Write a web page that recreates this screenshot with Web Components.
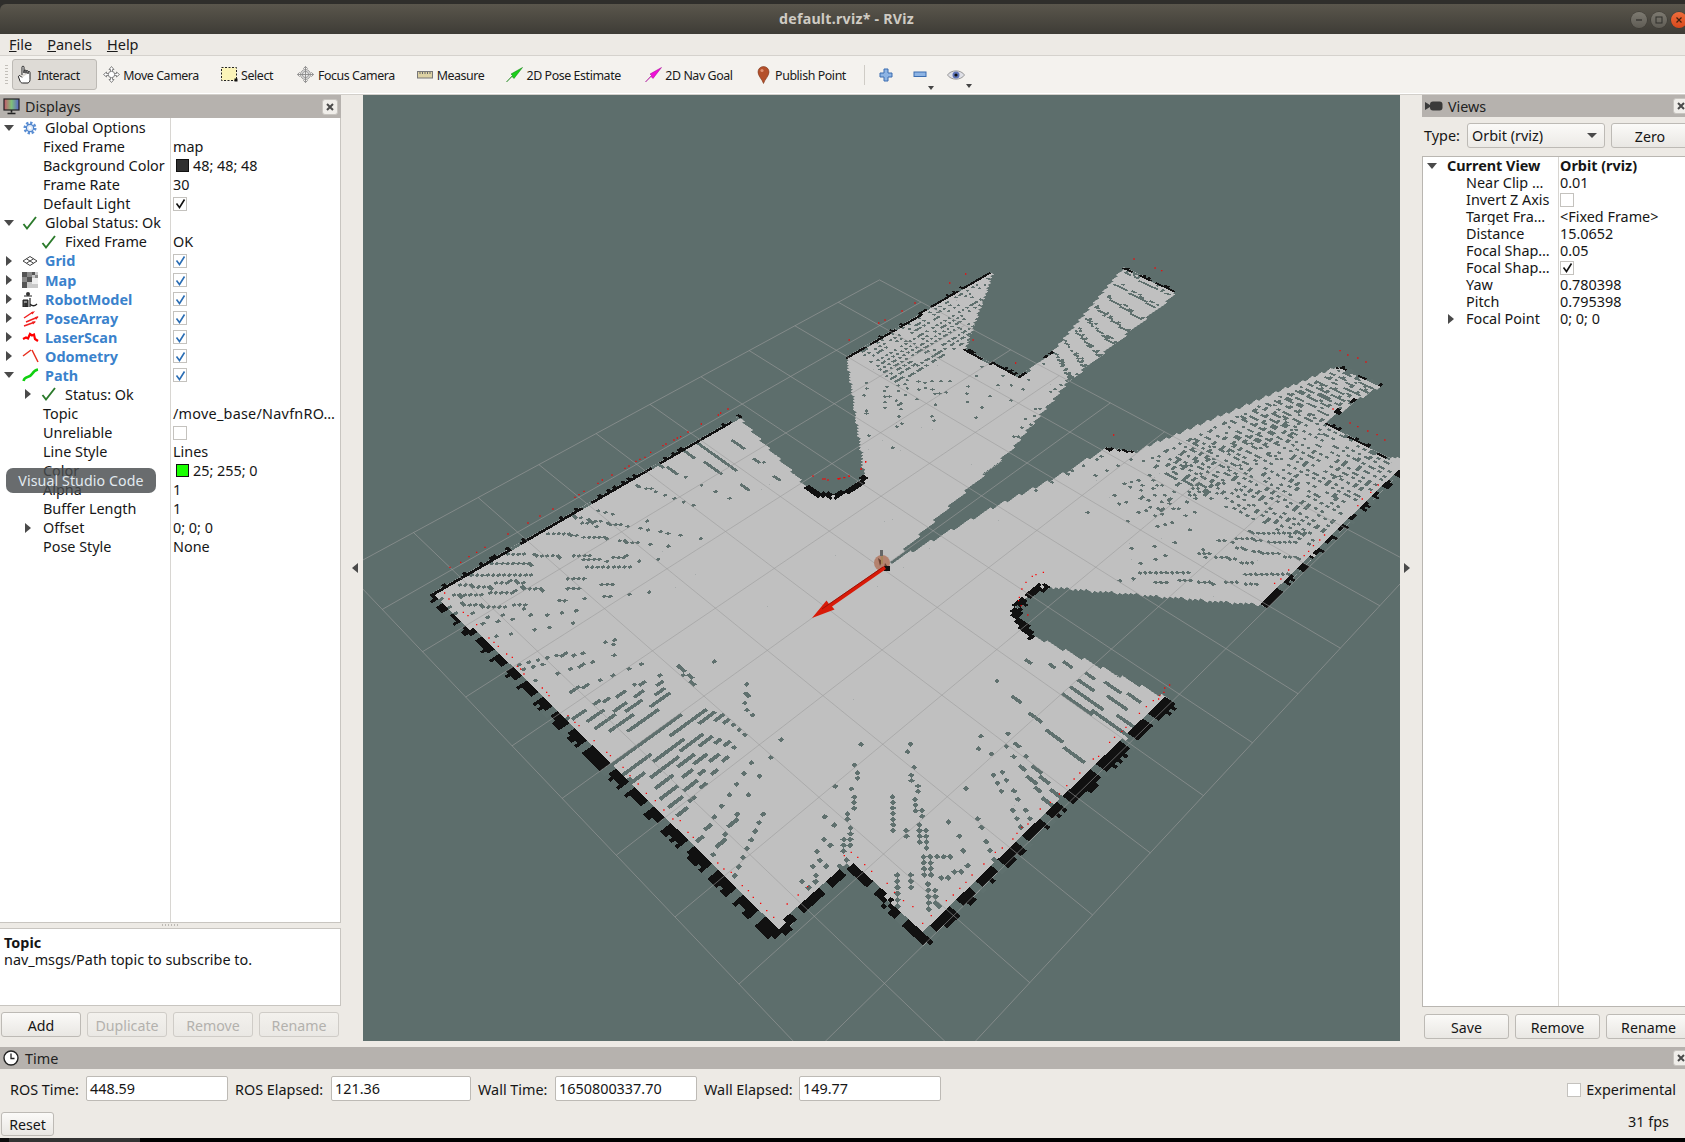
<!DOCTYPE html>
<html><head><meta charset="utf-8">
<style>
html,body{margin:0;padding:0;background:#edeae5;overflow:hidden}
body{font:14.4px "Noto Sans",sans-serif;color:#151515}
</style></head>
<body>
<rviz-window>
  <title-bar>default.rviz* - RViz</title-bar>
  <menu-bar><u>F</u>ile|<u>P</u>anels|<u>H</u>elp</menu-bar>
  <tool-bar></tool-bar>
  <dock-area>
    <dock-panel slot="left" title="Displays" icon="monitor" closable>
      <tree-view name-w="170" row-h="19.07" style="height:805px" bleft="0">
        <prop-row arrow="down" icon="gear" label="Global Options"></prop-row>
        <prop-row level="1" label="Fixed Frame" value="map"></prop-row>
        <prop-row level="1" label="Background Color" value="48; 48; 48" swatch="#303030"></prop-row>
        <prop-row level="1" label="Frame Rate" value="30"></prop-row>
        <prop-row level="1" label="Default Light" check="black"></prop-row>
        <prop-row arrow="down" icon="check" label="Global Status: Ok"></prop-row>
        <prop-row level="1" icon="check" label="Fixed Frame" value="OK"></prop-row>
        <prop-row arrow="right" icon="grid" label="Grid" blue check="blue"></prop-row>
        <prop-row arrow="right" icon="map" label="Map" blue check="blue"></prop-row>
        <prop-row arrow="right" icon="robot" label="RobotModel" blue check="blue"></prop-row>
        <prop-row arrow="right" icon="pose" label="PoseArray" blue check="blue"></prop-row>
        <prop-row arrow="right" icon="laser" label="LaserScan" blue check="blue"></prop-row>
        <prop-row arrow="right" icon="odom" label="Odometry" blue check="blue"></prop-row>
        <prop-row arrow="down" icon="path" label="Path" blue check="blue"></prop-row>
        <prop-row level="1" arrow="right" icon="check" label="Status: Ok"></prop-row>
        <prop-row level="1" label="Topic" value="/move_base/NavfnRO…" vls=".25"></prop-row>
        <prop-row level="1" label="Unreliable" check="off"></prop-row>
        <prop-row level="1" label="Line Style" value="Lines"></prop-row>
        <prop-row level="1" label="Color" value="25; 255; 0" swatch="#19ff00"></prop-row>
        <prop-row level="1" label="Alpha" value="1"></prop-row>
        <prop-row level="1" label="Buffer Length" value="1"></prop-row>
        <prop-row level="1" arrow="right" label="Offset" value="0; 0; 0"></prop-row>
        <prop-row level="1" label="Pose Style" value="None"></prop-row>
        <os-tooltip>Visual Studio Code</os-tooltip>
      </tree-view>
      <grip-dots></grip-dots>
      <help-box><b>Topic</b><span>nav_msgs/Path topic to subscribe to.</span></help-box>
      <button-row gap="6" pad="1">
        <qt-button w="80">Add</qt-button><qt-button w="80" disabled>Duplicate</qt-button><qt-button w="80" disabled>Remove</qt-button><qt-button w="80" disabled>Rename</qt-button>
      </button-row>
    </dock-panel>
    <splitter-arrow slot="sl" dir="left"></splitter-arrow>
    <map-view slot="center"></map-view>
    <splitter-arrow slot="sr" dir="right"></splitter-arrow>
    <dock-panel slot="right" title="Views" icon="camera" closable wide>
      <type-row></type-row>
      <tree-view name-w="135" row-h="17.05" bleft="1" style="height:851px">
        <prop-row arrow="down" label="Current View" bold value="Orbit (rviz)" valbold vx="1"></prop-row>
        <prop-row level="1" label="Near Clip …" value="0.01" vx="1"></prop-row>
        <prop-row level="1" label="Invert Z Axis" check="off" vx="1"></prop-row>
        <prop-row level="1" label="Target Fra…" value="&lt;Fixed Frame&gt;" vx="1"></prop-row>
        <prop-row level="1" label="Distance" value="15.0652" vx="1"></prop-row>
        <prop-row level="1" label="Focal Shap…" value="0.05" vx="1"></prop-row>
        <prop-row level="1" label="Focal Shap…" check="black" vx="1"></prop-row>
        <prop-row level="1" label="Yaw" value="0.780398" vx="1"></prop-row>
        <prop-row level="1" label="Pitch" value="0.795398" vx="1"></prop-row>
        <prop-row level="1" arrow="right" label="Focal Point" value="0; 0; 0" vx="1"></prop-row>
      </tree-view>
      <button-row gap="6" pad="2" top="7">
        <qt-button w="85">Save</qt-button><qt-button w="85">Remove</qt-button><qt-button w="85">Rename</qt-button>
      </button-row>
    </dock-panel>
  </dock-area>
  <time-panel></time-panel>
  <bottom-strip></bottom-strip>
</rviz-window>

<script>
const ICONS={
 monitor:`<svg width="17" height="17" viewBox="0 0 17 17"><defs><linearGradient id="m" x1="0" x2="1"><stop offset="0" stop-color="#c8586a"/><stop offset=".5" stop-color="#7fbf7a"/><stop offset="1" stop-color="#5a64c8"/></linearGradient></defs><rect x="1" y="1" width="15" height="11" fill="url(#m)" stroke="#222" stroke-width="1.2"/><path d="M8.5 12v2.5M4.5 15.5h8" stroke="#222" stroke-width="1.6"/></svg>`,
 camera:`<svg width="18" height="12" viewBox="0 0 18 12"><path d="M0 2l5 3v2l-5 3z" fill="#3a3a3a"/><rect x="5" y="1.5" width="12.5" height="9" rx="3" fill="#3a3a3a"/></svg>`,
 clock:`<svg width="16" height="16" viewBox="0 0 16 16"><circle cx="8" cy="8" r="7" fill="#fff" stroke="#222" stroke-width="1.4"/><path d="M8 3.5V8.5H11.5" fill="none" stroke="#222" stroke-width="1.3"/></svg>`,
 gear:`<svg width="16" height="16" viewBox="0 0 16 16"><circle cx="8" cy="8" r="5.2" fill="none" stroke="#5b8fd4" stroke-width="2.6" stroke-dasharray="2.3 1.7"/><circle cx="8" cy="8" r="3.6" fill="#dfe9f6" stroke="#4f84cc" stroke-width="1.2"/><circle cx="8" cy="8" r="1.3" fill="#fff"/></svg>`,
 check:`<svg width="16" height="16" viewBox="0 0 16 16"><path d="M1.5 9 5 13.5 14 2" fill="none" stroke="#2b7a2b" stroke-width="1.9"/></svg>`,
 grid:`<svg width="16" height="12" viewBox="0 0 16 12"><path d="M8 1.5 15 6 8 10.5 1 6zM4.5 3.8 11.5 8.2M11.5 3.8 4.5 8.2" fill="#fff" stroke="#444" stroke-width="1"/></svg>`,
 map:`<svg width="16" height="16" viewBox="0 0 16 16"><rect width="16" height="16" fill="#c9c9c9"/><path d="M0 0h5v5H0zM5 5h5v5H5zM0 10h5v6H0zM10 0h3v3h-3z" fill="#555"/><path d="M5 0h5v5H5zM0 5h5v5H0zM13 3h3v3h-3z" fill="#8a8a8a"/><path d="M10 6h6v6h-6z" fill="#eee"/></svg>`,
 robot:`<svg width="16" height="16" viewBox="0 0 16 16"><circle cx="6" cy="3" r="2" fill="#333"/><path d="M2 5h8M1 9h5v7H1z" stroke="#222" fill="#444"/><path d="M4 11v5M8 7v9M8 13c3 3 5 2 7 0" stroke="#222" fill="none" stroke-width="1.2"/><path d="M2 11h3" stroke="#ddd"/></svg>`,
 pose:`<svg width="17" height="17" viewBox="0 0 17 17"><path d="M2 8 11 2M4 12 16 7M2 16 13 12" stroke="#f02020" stroke-width="1.5"/><path d="M9 2.5 13 1 10.5 4.5M13 7 16.5 6.5 14 10M10 11.5 14 11.5 11 14.5" fill="#f02020"/></svg>`,
 laser:`<svg width="17" height="12" viewBox="0 0 17 12"><path d="M1 8 4 6.5 6 7.5 8 3 10 4.5 12 3.5 13 8 16 10" fill="none" stroke="#f00" stroke-width="2.2"/></svg>`,
 odom:`<svg width="17" height="14" viewBox="0 0 17 14"><path d="M1 7 9 1M10 1 16 13" stroke="#e83020" stroke-width="1.5"/></svg>`,
 path:`<svg width="17" height="15" viewBox="0 0 17 15"><path d="M1.5 13C3 7 7 11 10 6 12 3 13 2 16 1.5" fill="none" stroke="#10d010" stroke-width="2.5"/></svg>`,
 hand:`<svg width="17" height="19" viewBox="0 0 17 19"><path d="M5 10V2.2a1 1 0 0 1 2 0V8M7 8V6a1 1 0 0 1 2 0v2.5M9 8V6.5a1 1 0 0 1 2 0V9M11 8.5V7.5a1 1 0 0 1 2 0v7c0 2-1 3-2 3.5H5.5C4 18 3.5 17 3 16L1.5 12c-.4-1.2 1-2 2-1L5 12.5" fill="#fff" stroke="#222" stroke-width="1"/></svg>`,
 move:`<svg width="17" height="17" viewBox="0 0 17 17"><g fill="#fff" stroke="#777" stroke-width=".9"><path d="M8.5 .5 11 3.5H9.5V6H7.5V3.5H6zM8.5 16.5 11 13.5H9.5V11H7.5V13.5H6zM.5 8.5 3.5 6V7.5H6V9.5H3.5V11zM16.5 8.5 13.5 6V7.5H11V9.5H13.5V11z"/><circle cx="8.5" cy="8.5" r="3.2"/></g></svg>`,
 select:`<svg width="17" height="15" viewBox="0 0 17 15"><rect x=".5" y=".5" width="15" height="13" fill="#fbf4b8" stroke="#222" stroke-dasharray="2 1.5"/><rect x="13.5" y="11.5" width="3" height="3" fill="#111"/></svg>`,
 focus:`<svg width="19" height="19" viewBox="0 0 19 19"><g fill="none" stroke="#888" stroke-width="1"><circle cx="9.5" cy="9.5" r="5.5" fill="#eee"/><path d="M9.5 .5V18.5M.5 9.5H18.5M6 9.5a3.5 3.5 0 0 0 7 0 3.5 3.5 0 0 0-7 0"/><path d="M7 3 9.5 .5 12 3M7 16 9.5 18.5 12 16M3 7 .5 9.5 3 12M16 7 18.5 9.5 16 12"/></g></svg>`,
 measure:`<svg width="16" height="8" viewBox="0 0 16 8"><rect x=".5" y=".5" width="15" height="6.5" fill="#ddd2a4" stroke="#777"/><path d="M3 1v2M5.5 1v2M8 1v2M10.5 1v2M13 1v2" stroke="#666"/></svg>`,
 pose2d:`<svg width="17" height="16" viewBox="0 0 17 16"><path d="M.5 15 6 9.5 8 11.5 16.5 .5 5 7 6.5 8.5Z" fill="#1ad01a" stroke="#0a7a0a" stroke-width=".5"/></svg>`,
 nav:`<svg width="17" height="16" viewBox="0 0 17 16"><path d="M.5 15 6 9.5 8 11.5 16.5 .5 5 7 6.5 8.5Z" fill="#f010d8" stroke="#a00090" stroke-width=".5"/></svg>`,
 pin:`<svg width="13" height="18" viewBox="0 0 13 18"><path d="M6.5 17.5C5 13 1 10 1 6a5.5 5.5 0 0 1 11 0c0 4-4 7-5.5 11.5Z" fill="#b4502a" stroke="#7a3418" stroke-width=".6"/><circle cx="5" cy="4.5" r="1.6" fill="#e09070"/></svg>`,
 plus:`<svg width="14" height="14" viewBox="0 0 14 14"><path d="M5 1h4v4h4v4H9v4H5V9H1V5h4z" fill="#8db4e4" stroke="#3a6db0"/></svg>`,
 minus:`<svg width="14" height="7" viewBox="0 0 14 7"><rect x="1" y="1" width="12" height="4.5" fill="#8db4e4" stroke="#3a6db0"/></svg>`,
 eye:`<svg width="18" height="12" viewBox="0 0 18 12"><path d="M.5 6C4 .5 14 .5 17.5 6 14 11.5 4 11.5 .5 6Z" fill="#dfe0e6" stroke="#999"/><circle cx="9" cy="6" r="3.5" fill="#5e74b8"/><circle cx="9" cy="6" r="1.6" fill="#111"/></svg>`
};
const FONT='"Noto Sans",sans-serif';
function def(name,cls){customElements.define(name,cls)}
function shadow(el,html){const r=el.attachShadow({mode:'open'});r.innerHTML=html;return r}

def('rviz-window',class extends HTMLElement{constructor(){super();shadow(this,`<style>:host{display:flex;flex-direction:column;width:1685px;height:1142px;overflow:hidden;background:#edeae5;position:relative}</style><slot></slot>`)}});

def('title-bar',class extends HTMLElement{constructor(){super();shadow(this,`<style>
:host{display:block;background:#2f2e2b;padding-top:4px;height:34px;box-sizing:border-box;flex:none}
.b{height:30px;display:grid;grid-template-columns:1fr auto 1fr;align-items:center;border-radius:6px 0 0 0;background:linear-gradient(#5a564c,#3e3c36)}
.t{grid-column:2;font:bold 14.2px ${FONT};color:#cfcbc3;padding:0 0 2px 8px;letter-spacing:.25px}
.w{grid-column:3;justify-self:end;display:flex;gap:4px;margin-right:-2px;margin-top:1px}
.w i{display:block;width:16px;height:16px;border-radius:50%;background:linear-gradient(#7d7a71,#5f5c54);box-shadow:0 0 0 .5px #3a3832;position:relative}
.w i.c{background:linear-gradient(#ee6d3c,#d8481c)}
.w svg{position:absolute;left:3px;top:3px}
</style><div class="b"><div class="t"><slot></slot></div><div class="w">
<i><svg width="10" height="10"><path d="M2 5h6" stroke="#2f2e2a" stroke-width="1.2"/></svg></i>
<i><svg width="10" height="10"><rect x="2" y="2" width="6" height="6" fill="none" stroke="#2f2e2a"/></svg></i>
<i class="c"><svg width="10" height="10"><path d="M2.5 2.5l5 5M7.5 2.5l-5 5" stroke="#41200f" stroke-width="1.2"/></svg></i>
</div></div>`)}});

def('menu-bar',class extends HTMLElement{constructor(){super();shadow(this,`<style>
:host{display:flex;flex:none;height:22px;box-sizing:border-box;border-bottom:1px solid #d5d2cd;background:#edeae5;padding:0 0 2px 9px;gap:15px;align-items:center;font:14.5px/20px ${FONT};color:#1b1b1b}
</style><slot></slot>`)}
 connectedCallback(){const parts=this.innerHTML.split('|');this.innerHTML=parts.map(p=>`<span>${p}</span>`).join('')}});

def('tool-button',class extends HTMLElement{constructor(){super();shadow(this,`<style>
:host{display:flex;flex:none;align-items:center;height:31px;margin-left:1.3px;padding:0 16px 0 4px;box-sizing:border-box;border:1px solid transparent;border-radius:3px;font:12.4px ${FONT};letter-spacing:-.42px;color:#1a1a1a}
:host([active]){background:#dedbd6;border-color:#bdbab5;margin-left:0}
.i{width:17px;height:19px;display:flex;align-items:center;justify-content:center;margin-right:3.5px;flex:none}
.l{white-space:nowrap;padding-top:1px}
</style><span class="i"></span><span class="l"><slot></slot></span>`)}
 connectedCallback(){this.shadowRoot.querySelector('.i').innerHTML=ICONS[this.getAttribute('icon')]||'';this.shadowRoot.querySelector('.l').style.width=this.getAttribute('w')+'px'}});

def('tool-bar',class extends HTMLElement{constructor(){super();const B=[['hand','Interact',42,1],['move','Move Camera',74],['select','Select',33],['focus','Focus Camera',75],['measure','Measure',46],['pose2d','2D Pose Estimate',95],['nav','2D Nav Goal',66],['pin','Publish Point',71]];
 shadow(this,`<style>
:host{display:flex;flex:none;align-items:center;height:39px;box-sizing:border-box;background:#f4f2ee;border-bottom:1px solid #d2cfca;box-shadow:inset 0 -1px 0 #fff;padding:0 0 1px 5px}
.h{width:3px;height:20px;margin-right:4px;background:repeating-linear-gradient(#c3c0ba 0 1px,transparent 1px 3px)}
.s{width:1px;height:20px;background:#cfccc6;margin:0 14px 0 1px}
.g{position:relative;display:flex;justify-content:center;width:14px;margin-right:20px}
.g b{position:absolute;right:-7px;top:15px;border:3.5px solid transparent;border-top:4px solid #444;border-bottom:0}
</style><span class="h"></span>${B.map(b=>`<tool-button icon="${b[0]}" w="${b[2]}" ${b[3]?'active':''}>${b[1]}</tool-button>`).join('')}
<span class="s"></span><span class="g">${ICONS.plus}</span><span class="g">${ICONS.minus}<b></b></span><span class="g" style="width:18px">${ICONS.eye}<b></b></span>`)}});

def('dock-area',class extends HTMLElement{constructor(){super();shadow(this,`<style>
:host{display:grid;flex:none;height:952px;grid-template-columns:341px 22px 1037px 22px 263px;overflow:hidden}
.c{height:946px}
</style><slot name="left"></slot><slot name="sl"></slot><div class="c"><slot name="center"></slot></div><slot name="sr"></slot><slot name="right"></slot>`)}});

def('close-btn',class extends HTMLElement{constructor(){super();shadow(this,`<style>
:host{display:flex;align-items:center;justify-content:center;width:16px;height:16px;box-sizing:border-box;border:1px solid #c8c5c0;border-radius:3px;background:#f0eeea;flex:none}
</style><svg width="8" height="8"><path d="M1 1l6 6M7 1l-6 6" stroke="#4a4a4a" stroke-width="2"/></svg>`)}});

def('dock-panel',class extends HTMLElement{constructor(){super();shadow(this,`<style>
:host{display:flex;flex-direction:column;min-width:0;overflow:hidden;height:952px}
:host([wide]) .in{width:268px}
.in{display:flex;flex-direction:column}
.hd{display:flex;align-items:center;background:#b6b2ae;height:23px;flex:none;padding:0 3px 0 3px;font:14.3px ${FONT};color:#222}
.ic{width:22px;display:flex;flex:none}
.t{flex:1}
:host([wide]) .hd{height:22px;padding-right:0;width:263px;box-sizing:border-box}
:host([wide]) .ic{width:23px}
:host([wide]) close-btn{margin-right:-4px}
</style><div class="hd"><span class="ic"></span><span class="t"></span><close-btn></close-btn></div><div class="in"><slot></slot></div>`)}
 connectedCallback(){const s=this.shadowRoot;s.querySelector('.ic').innerHTML=ICONS[this.getAttribute('icon')];if(this.hasAttribute('title')){s.querySelector('.t').textContent=this.getAttribute('title');this.removeAttribute('title')}}});

def('tree-view',class extends HTMLElement{constructor(){super();shadow(this,`<style>
:host{display:flex;flex-direction:column;box-sizing:border-box;background:#fff;position:relative;flex:none;border-right:1px solid #c8c5c0;border-bottom:1px solid #c8c5c0;overflow:hidden}
:host([bleft="1"]){border:1px solid #b9b6b1;margin-left:0}
.rest{flex:1;margin-left:var(--name-w);border-left:1px solid #d8d6d2}
</style><slot></slot><div class="rest"></div>`)}
 connectedCallback(){this.style.setProperty('--name-w',this.getAttribute('name-w')+'px');this.style.setProperty('--row-h',this.getAttribute('row-h')+'px')}});

const ARW={down:`<svg width="10" height="6"><path d="M0 0h10L5 6z" fill="#4a4a4a"/></svg>`,right:`<svg width="6" height="10"><path d="M0 0v10l6-5z" fill="#4a4a4a"/></svg>`};
def('prop-row',class extends HTMLElement{constructor(){super();shadow(this,`<style>
:host{display:flex;flex:none;height:var(--row-h);white-space:nowrap;font:14.4px/var(--row-h) ${FONT};color:#161616}
.n{width:var(--name-w);display:flex;align-items:center;flex:none;overflow:hidden}
.a{width:18px;display:flex;justify-content:center;align-items:center;flex:none}
.ic{display:flex;width:27px;justify-content:flex-start;padding-left:4px;box-sizing:border-box;flex:none;align-items:center}
.sp{width:6px;flex:none}
.v{flex:1;border-left:1px solid #d8d6d2;display:flex;align-items:center;padding-left:2px;overflow:hidden}
.box{width:14px;height:14px;box-sizing:border-box;border:1px solid #c4c2be;background:#fff;display:flex;align-items:center;justify-content:center;margin-left:0}
.sw{width:13px;height:13px;box-sizing:border-box;border:1px solid #111;margin:0 4px 0 3px;flex:none}
.blue{color:#3a82cc;font-weight:700}.bold{font-weight:700}
.l1{margin-left:1px}
</style><div class="n"></div><div class="v"></div>`)}
 connectedCallback(){const g=k=>this.getAttribute(k),lv=+(g('level')||0),s=this.shadowRoot;
  const ic=g('icon');let h=`<span style="width:${lv*19}px;flex:none"></span><span class="a">${ARW[g('arrow')]||''}</span>`;
  h+=ic?`<span class="ic">${ICONS[ic]}</span>`:`<span class="sp"></span>`;
  h+=`<span class="${this.hasAttribute('blue')?'blue':this.hasAttribute('bold')?'bold':''} ${lv&&ic?'l1':''}">${g('label')}</span>`;
  s.querySelector('.n').innerHTML=h;
  const chk=g('check'),col=chk=='blue'?'#2a6db4':'#111';let v='';
  if(chk)v=`<span class="box">${chk=='off'?'':`<svg width="11" height="11"><path d="M1.5 5.5 4.5 9.5 9.5 1.5" fill="none" stroke="${col}" stroke-width="1.6"/></svg>`}</span>`;
  else{if(g('swatch'))v=`<span class="sw" style="background:${g('swatch')}"></span>`;v+=`<span class="${this.hasAttribute('valbold')?'bold':''}" style="letter-spacing:${g('vls')||0}px">${(g('value')||'').replace(/</g,'&lt;')}</span>`}
  const ve=s.querySelector('.v');ve.innerHTML=v;ve.style.paddingLeft=(g('vx')||'2')+'px'}});

def('os-tooltip',class extends HTMLElement{constructor(){super();shadow(this,`<style>
:host{position:absolute;left:6px;top:350px;width:150px;height:25px;border-radius:7px;background:rgba(72,76,78,.82);color:#e2eaf0;font:14.2px/25px ${FONT};text-align:center;letter-spacing:.1px}
</style><slot></slot>`)}});

def('grip-dots',class extends HTMLElement{constructor(){super();shadow(this,`<style>
:host{display:block;height:5px;flex:none;position:relative}
i{position:absolute;left:162px;top:1px;width:16px;height:2px;background:repeating-linear-gradient(90deg,#bcb9b4 0 1px,transparent 1px 3px)}
</style><i></i>`)}});

def('help-box',class extends HTMLElement{constructor(){super();shadow(this,`<style>
:host{display:flex;flex-direction:column;flex:none;height:78px;box-sizing:border-box;background:#fff;border:1px solid #c8c5c0;border-left:0;padding:5px 4px;font:14.4px/17px ${FONT};color:#151515}
::slotted(b){display:block}
</style><slot></slot>`)}});

def('button-row',class extends HTMLElement{constructor(){super();shadow(this,`<style>:host{display:flex;flex:none;margin-top:6px}</style><slot></slot>`)}
 connectedCallback(){this.style.gap=this.getAttribute('gap')+'px';this.style.paddingLeft=this.getAttribute('pad')+'px';if(this.getAttribute('top'))this.style.marginTop=this.getAttribute('top')+'px'}});

def('qt-button',class extends HTMLElement{constructor(){super();shadow(this,`<style>
:host{display:flex;align-items:center;justify-content:center;flex:none;box-sizing:border-box;height:25px;padding-top:1px;border:1px solid #bdbab5;border-radius:3px;background:linear-gradient(#fbfaf8,#e9e7e3);font:14.2px ${FONT};color:#161616}
:host([disabled]){color:#b3b1ad;background:linear-gradient(#f3f1ed,#eae8e4);border-color:#cfccc7}
</style><slot></slot>`)}
 connectedCallback(){this.style.width=this.getAttribute('w')+'px'}});

def('type-row',class extends HTMLElement{constructor(){super();shadow(this,`<style>
:host{display:flex;align-items:center;height:25px;margin:6px 0 8px;padding-left:2px;font:14.4px ${FONT};color:#161616;flex:none}
.l{width:43px;flex:none}
.c{width:138px;height:25px;box-sizing:border-box;border:1px solid #bdbab5;border-radius:3px;background:linear-gradient(#fbfaf8,#ecEAE6);display:flex;align-items:center;padding:0 7px 0 4px;justify-content:space-between;flex:none}
.c i{border:5px solid transparent;border-top:5px solid #4a4a4a;border-bottom:0}
</style><span class="l">Type:</span><span class="c">Orbit (rviz)<i></i></span><qt-button w="78" style="margin-left:6px">Zero</qt-button>`)}});

def('splitter-arrow',class extends HTMLElement{constructor(){super();shadow(this,`<style>
:host{display:flex;align-items:center;justify-content:center;height:946px;box-sizing:border-box}
:host([dir=left]){padding-left:5px}
:host([dir=right]){padding-right:8px}
i{display:block;border:5px solid transparent;border-left:0;border-right:6px solid #4a4a4a}
:host([dir=right]) i{border-right:0;border-left:6px solid #4a4a4a}
</style><i></i>`)}});

def('time-panel',class extends HTMLElement{constructor(){super();
 const L=[['ROS Time:',69,'448.59',142],['ROS Elapsed:',89,'121.36',140],['Wall Time:',70,'1650800337.70',142],['Wall Elapsed:',88,'149.77',142]];
 shadow(this,`<style>
:host{display:flex;flex-direction:column;flex:none;height:91px;font:14.4px ${FONT};color:#161616}
.h{display:flex;align-items:center;height:22px;background:#b6b2ae;padding-left:3px;flex:none;color:#222}
.h .t{flex:1;padding-left:6px}
.h close-btn{margin-right:-4px}
.h svg{display:block}
.r1{display:flex;align-items:center;margin-top:7px;padding-left:10px;height:25px;flex:none}
.lb{white-space:nowrap;flex:none;margin-right:7px;padding-top:1px}
.f{box-sizing:border-box;height:25px;background:#fff;border:1px solid #bdbab5;border-radius:2px;line-height:24px;padding-left:3px;margin-right:7px;flex:none}
.ex{margin-left:auto;display:flex;align-items:center;gap:5px;padding-right:9px;margin-top:2px}
.ex i{display:block;width:14px;height:14px;box-sizing:border-box;background:#fff;border:1px solid #c4c2be}
.r2{display:flex;justify-content:space-between;align-items:flex-start;margin-top:11px;padding:0 16px 0 1px}
</style><div class="h">${ICONS.clock}<span class="t">Time</span><close-btn></close-btn></div>
<div class="r1">${L.map(l=>`<span class="lb" style="width:${l[1]}px">${l[0]}</span><span class="f" style="width:${l[3]}px">${l[2]}</span>`).join('')}<span class="ex"><i></i>Experimental</span></div>
<div class="r2"><qt-button w="53" style="height:24px">Reset</qt-button><span class="fps">31 fps</span></div>`)}});

def('bottom-strip',class extends HTMLElement{constructor(){super();shadow(this,`<style>:host{display:block;flex:none;height:4px;background:linear-gradient(90deg,#0c0c0c 0 9px,#333 9px 140px,#000 140px)}</style>`)}});

/* ---------- 3D view: real orbit-camera projection of an occupancy grid ---------- */
def('map-view',class extends HTMLElement{constructor(){super();
 const D=15.0652,P=.795398,Y=.780398,cx=881.5,cy=568,f=473/Math.tan(Math.PI/8);
 const cp=Math.cos(P),sp=Math.sin(P),cy2=Math.cos(Y),sy=Math.sin(Y);
 const C=[D*cp*cy2,D*cp*sy,D*sp],F=[-cp*cy2,-cp*sy,-sp],R=[-sy,cy2,0],U=[-sp*cy2,-sp*sy,cp];
 const dot=(a,b)=>a[0]*b[0]+a[1]*b[1]+a[2]*b[2];
 const pr=(x,y)=>{const d=[x-C[0],y-C[1],-C[2]],z=dot(d,F);return [cx+f*dot(d,R)/z,cy-f*dot(d,U)/z]};
 const inv=(u,v)=>{const d=[0,1,2].map(i=>F[i]*f+R[i]*(u-cx)+U[i]*(cy-v)),t=-C[2]/d[2];return [C[0]+t*d[0],C[1]+t*d[1]]};
 const z8=(x,y)=>[420+x/3,400+y/3],z9=(x,y)=>[830+x/2.703,250+y/3],z10=(x,y)=>[560+x/2.45,640+y/3];
 const CS=.05;let seed=12345;const rnd=()=>(seed=(seed*1664525+1013904223)%4294967296)/4294967296;
 const fx=n=>n.toFixed(2);
 const quad=(a,b,c,d)=>{const o=[pr(a,c),pr(b,c),pr(b,d),pr(a,d)];return 'M'+o.map(p=>fx(p[0])+' '+fx(p[1])).join('L')+'Z'};
 const cell=(i,j)=>quad(i*CS,(i+1)*CS,j*CS,(j+1)*CS);
 /* polygon raster */
 const poly=[[432,594],[739,417],[770,450],[800,480],[808,488],[818,494],[835,495],[850,490],[865,477],[861,450],[856,417],[847,357],[993,272],[965,350],[1019,377],[1052,353],[1124,268],[1174,292],[1172,297],[1067,383],[1011,450],[969,488],[924,530],[891,563],[952,530],[995,507],[1035,488],[1067,472],[1106,448],[1135,452],[1337,367],[1381,386],[1352,403],[1339,413],[1326,423],[1385,457],[1420,458],[1420,455],[1263,605],[1048,587],[1037,588],[1019,603],[1015,613],[1022,627],[1033,637],[1042,640],[1070,653],[1170,700],[923,943],[919,930],[852,867],[846,865],[776,937],[560,717]].map(p=>inv(p[0],p[1]));
 let floor='';{const ys=poly.map(p=>p[1]),j0=Math.floor(Math.min(...ys)/CS),j1=Math.ceil(Math.max(...ys)/CS);
  for(let j=j0;j<=j1;j++){const y=(j+.5)*CS,xs=[];for(let k=0;k<poly.length;k++){const a=poly[k],b=poly[(k+1)%poly.length];if((a[1]<=y)!=(b[1]<=y))xs.push(a[0]+(y-a[1])/(b[1]-a[1])*(b[0]-a[0]))}
   xs.sort((a,b)=>a-b);for(let k=0;k+1<xs.length;k+=2){const i0=Math.round(xs[k]/CS),i1=Math.round(xs[k+1]/CS);if(i1>i0)floor+=quad(i0*CS,i1*CS,j*CS,(j+1)*CS)}}}
 /* free-cell dots */
 const gray=new Set(),black=new Set();
 const addTo=(S,p)=>{const w=inv(p[0],p[1]);S.add(Math.floor(w[0]/CS)+','+Math.floor(w[1]/CS))};
 const dots=(z,a)=>{for(let k=0;k<a.length;k+=2)addTo(gray,z(a[k],a[k+1]))};
 const streak=(z,a,step)=>{for(const s of a){const A=inv(...z(s[0],s[1])),B=inv(...z(s[2],s[3])),L=Math.hypot(B[0]-A[0],B[1]-A[1]),n=Math.max(1,Math.round(L/step));for(let k=0;k<=n;k++){const t=k/n;gray.add(Math.floor((A[0]+(B[0]-A[0])*t)/CS)+','+Math.floor((A[1]+(B[1]-A[1])*t)/CS))}}};
 const rows=(z,a)=>streak(z,a,.0707),lines=(z,a)=>streak(z,a,.04);
 const lat=(z,q,n,m,keep,dbl)=>{for(let a=0;a<=n;a++)for(let b=0;b<=m;b++){if(rnd()>keep)continue;const s=a/n,t=b/m,mix=(k)=>((1-s)*((1-t)*q[0][k]+t*q[1][k])+s*((1-t)*q[3][k]+t*q[2][k]));const p=z(mix(0),mix(1));addTo(gray,p);if(dbl&&rnd()<dbl){addTo(gray,[p[0]+2.6,p[1]-1.8])}}};
 rows(z8,[[240,465,310,460],[340,465,425,472],[460,465,510,468],[200,495,340,495],[490,478,560,480],[575,472,620,472],[500,500,635,500],[160,525,340,525],[225,548,315,548],[120,555,155,555],[160,565,220,565],[300,560,375,572],[95,585,190,585],[210,578,285,578],[380,400,475,407],[490,412,565,415],[595,422,655,428],[460,350,540,365],[490,370,520,372],[560,370,605,375],[445,540,490,540],[440,565,480,565],[545,558,575,558],[550,590,575,590],[415,602,440,602],[650,258,690,268],[130,620,260,618],[280,612,320,615]]);
 lines(z8,[[835,130,950,212],[855,185,905,220],[795,150,825,175],[940,120,975,145],[1000,178,1030,190],[745,205,775,222],[960,255,990,270],[1060,228,1078,237],[715,192,730,205]]);
 dots(z8,[1395,10,1340,30,1340,40,1440,10,1435,50,1445,70,1425,80,1345,105,1420,143,680,362,660,385,685,390,720,395,745,400,785,405,845,415,690,432,745,437,630,580,690,577,715,478,660,483,495,595,470,632,460,670,390,683,345,688,425,637,380,645,330,650,280,657,235,662,205,650,190,672,228,708,272,702,555,726,582,720,582,733,580,765,880,785,978,852,975,885,490,760,460,766,436,760,410,767,382,775,352,780,328,785,300,795,310,805,340,800,370,793,452,806,480,798,518,786,425,773,410,820,345,842,500,858,540,840,578,826,628,806,665,792,720,826,530,332,555,338,580,342,535,378,625,380,705,275,735,285,765,295,792,305,820,315,800,232,845,253,885,272,930,295,65,600,85,620,100,640,120,610,160,640,250,640,310,625]);
 /* upper-left wing */
 lat(z9,[[85,305],[425,85],[375,270],[175,400]],9,24,.78,.25);
 dots(z9,[95,400,95,415,95,435,100,480,150,410,150,425,150,440,150,455,150,475,165,440,185,390,185,405,185,420,205,390,205,405,205,415,180,450,180,465,195,480,205,438,240,395,258,395,275,395,240,418,258,418,275,418,300,395,320,395,285,430,300,430,315,430,375,430,370,455,240,447,290,465,275,500,285,510,190,500,175,530,195,520,105,555,170,592,395,503,415,473,435,440,450,405,470,380,410,350,395,375,380,410,490,450,495,405,520,415,540,390,575,340]);
 /* corridor + far right bands */
 lat(z9,[[610,310],[800,70],[915,135],[650,390]],18,7,.9,.45);
 dots(z9,[495,560,510,560,520,530,540,525,530,505,550,500,570,475,590,465,555,478,600,425,612,418,625,402,640,395,650,378,665,370,605,445,575,490]);
 lat(z9,[[850,635],[1375,362],[1468,415],[1010,725]],11,27,.9,.35);
 lat(z9,[[1010,735],[1340,530],[1525,650],[1290,880]],14,18,.85,.2);
 rows(z9,[[835,968,975,968],[880,997,915,997],[945,990,1040,1002],[1070,995,1150,1005],[1120,972,1270,972],[1000,910,1140,940],[1100,895,1270,925],[1095,865,1260,880],[1050,870,1085,875],[1130,845,1280,850]]);
 lat(z9,[[800,700],[1000,640],[1010,735],[890,800]],7,12,.45,0);
 dots(z9,[555,720,600,695,645,672,655,665,685,650,720,625,735,618,720,677,750,660,780,645,815,630,885,632,770,735,780,760,800,757,697,787,808,813,880,735,900,735,845,740,835,785,855,780,880,800,895,785,905,820,880,830,925,815,935,880,905,915,880,890,880,927,845,940,818,895,785,990,820,985,960,800,985,790,975,840,1010,905,1015,925,1045,925]);
 /* near streaks and dots */
 lines(z10,[[30,155,45,145],[55,140,70,130],[65,240,100,215],[85,265,135,225],[125,272,180,225],[170,272,240,210],[20,240,60,212],[90,190,115,180],[130,210,160,190],[160,210,195,185],[140,170,160,155],[185,135,205,130],[185,170,205,155],[220,200,262,165],[235,160,255,150],[235,135,250,125],[125,370,300,225],[270,285,355,210],[340,250,380,215],[380,245,400,225],[400,248,415,238],[155,400,215,350],[170,425,210,400],[230,365,300,305],[300,325,345,290],[345,310,370,295],[385,305,395,298],[405,315,415,310],[225,410,285,360],[290,380,325,350],[335,365,360,345],[370,360,385,350],[400,360,412,350],[235,445,275,405],[300,408,318,395],[345,400,355,390],[375,400,388,390],[248,475,285,445],[305,450,330,430],[345,440,360,430],[270,500,295,478],[318,485,330,472],[290,525,305,512],[355,570,370,555],[335,605,352,588],[385,620,400,605],[415,558,430,545],[295,90,303,100],[308,105,318,115],[320,122,328,130],
 [1145,60,1155,70],[1200,72,1215,82],[1235,65,1250,78],[1290,100,1305,112],[1275,120,1310,150],[1335,125,1370,152],[1250,140,1325,205],[1235,160,1395,295],[1345,170,1390,210],[1395,160,1425,185],[1365,225,1410,265],[1115,170,1125,180],[1150,220,1175,240],[1195,270,1225,298],[1237,322,1278,360],[1115,310,1128,322],[1130,378,1142,390],[1158,378,1175,390],[1148,410,1162,425],[1178,410,1195,422],[1165,442,1180,455],[1205,450,1222,465],[1185,475,1200,488]]);
 dots(z10,[458,132,452,160,458,165,455,188,460,210,473,225,378,65,290,78,543,298,517,352,470,368,453,400,490,407,435,432,415,465,463,463,397,497,433,522,498,522,378,532,488,548,360,562,405,582,478,573,390,612,468,600,378,645,458,625,448,652,438,678,428,707,12,40,34,45,57,40,132,45,80,67,55,70,25,87,130,105,170,87,200,72,100,120,425,255,440,268,453,283,430,322,
 739,313,723,375,730,398,730,415,675,438,713,447,720,470,720,488,722,502,705,520,705,538,650,530,673,555,712,563,712,580,712,597,695,597,695,615,695,632,712,615,647,600,664,615,630,633,636,660,620,678,653,680,628,703,628,722,595,725,610,743,688,680,703,660,
 817,470,817,487,817,503,817,520,817,537,817,554,817,571,850,572,850,590,860,313,852,335,869,380,862,405,862,422,878,438,878,455,872,478,872,495,872,512,888,512,888,530,882,553,882,570,898,570,882,588,898,588,882,605,898,605,898,625,
 892,650,908,650,925,650,958,650,940,650,892,668,908,668,892,688,908,688,892,705,908,705,935,713,952,713,968,695,985,695,1000,677,990,632,980,588,953,545,1025,537,1035,562,1045,605,1055,632,1065,657,
 827,705,827,722,827,740,827,757,827,775,827,792,860,705,860,722,860,740,903,730,920,750,903,750,903,768,920,768,905,790,905,810,920,795,932,795,
 1070,122,1032,288,1027,325,1060,342,1095,318,1100,280,1112,348,1143,350,1063,403,1085,397,1072,428,1095,422,1082,452,1115,452,1122,478,1110,510,1143,510,1120,535,1150,535,1130,560,995,445]);
 /* walls */
 const wall=(pts,o)=>{o=Object.assign({th:1,on:30,off:0,jit:0,rj:2},o);let run=o.on+Math.floor(rnd()*o.rj),isOn=true,cnt=0;
  for(let k=0;k+1<pts.length;k++){const A=inv(...pts[k]),B=inv(...pts[k+1]),L=Math.hypot(B[0]-A[0],B[1]-A[1]),n=Math.max(1,Math.round(L/CS)),dx=(B[0]-A[0])/L,dy=(B[1]-A[1])/L;
   for(let s=0;s<=n;s++){if(cnt++>=run){isOn=!isOn;cnt=0;run=isOn?o.on+Math.floor(rnd()*o.rj):o.off}
    const X=A[0]+(B[0]-A[0])*s/n,Y2=A[1]+(B[1]-A[1])*s/n,th=o.th+(rnd()<o.jit?1:0);
    for(let t=0;t<th;t++){const off=(t-(o.th-1)/2)*CS,ci=Math.floor((X-dy*off)/CS),cj=Math.floor((Y2+dx*off)/CS),key=ci+','+cj;
     if(isOn)black.add(key);else gray.add(key)}}}};
 wall([[432,595],[739,417]],{th:1,on:16,off:2,jit:.18,rj:14});
 wall([[808,488],[818,494],[835,496],[850,490],[860,484],[865,477]],{th:2,on:30});
 wall([[847,357],[993,272]],{th:1,on:8,off:1,rj:8,jit:.1});
 wall([[965,350],[1019,377]],{th:1,on:6,off:2,rj:6,jit:.3});
 wall([[1019,377],[1030,370]],{on:3,off:3});wall([[1046,357],[1052,353]],{on:3,off:3});
 wall([[1124,268],[1174,292]],{on:4,off:2,rj:4,jit:.2});
 wall([[1106,448],[1112,450]],{});wall([[1120,451],[1135,452]],{on:3,off:2});
 wall([[1337,367],[1381,386]],{on:3,off:3,rj:3,jit:.2});
 wall([[1352,403],[1356,400]],{});wall([[1337,413],[1340,411]],{th:2});
 wall([[1326,423],[1385,457]],{on:3,off:2,rj:4,jit:.3});
 wall([[1399,472],[1280,590]],{th:1,on:2,off:2,rj:2,jit:.45});
 wall([[1280,590],[1265,604]],{th:2,on:8});
 wall([[1048,587],[1037,588],[1019,603],[1015,613],[1022,627],[1033,637]],{th:2,on:30,jit:.2});
 wall([[1168,702],[1075,792]],{th:3,on:5,off:1,rj:5,jit:.2});
 wall([[1075,792],[926,938]],{th:2,on:3,off:1,rj:3,jit:.5});
 wall([[917,932],[852,869]],{th:2,on:3,off:1,rj:4});
 wall([[842,872],[779,933]],{th:2,on:3,off:1,rj:4});
 wall([[774,931],[660,820]],{th:2,on:3,off:1,rj:3,jit:.6});
 wall([[660,820],[560,719]],{th:2,on:4,off:1,rj:3,jit:.6});
 wall([[560,719],[470,632]],{th:2,on:3,off:1,rj:3,jit:.4});
 wall([[470,632],[434,597]],{th:1,on:2,off:1,rj:2,jit:.6});
 wall([[918,933],[924,939]],{th:2});wall([[773,932],[777,936]],{th:2});
 const toPath=S=>{let d='';S.forEach(k=>{const [i,j]=k.split(',').map(Number);d+=cell(i,j)});return d};
 black.forEach(k=>gray.delete(k));
 /* grid */
 let grid='';for(let k=-5;k<=5;k++){const a=pr(k,-5),b=pr(k,5),c=pr(-5,k),d=pr(5,k);grid+=`M${fx(a[0])} ${fx(a[1])}L${fx(b[0])} ${fx(b[1])}M${fx(c[0])} ${fx(c[1])}L${fx(d[0])} ${fx(d[1])}`}
 /* scan specks */
 let red='';const sp8=[88,500,120,485,145,468,168,455,193,440,262,400,322,367,358,346,397,325,463,290,475,282,490,272,532,248,545,238,574,223,613,203,625,196,646,182,658,176,673,170,690,155,727,135,736,130,760,118,770,112,780,108,802,94,842,70,893,43,900,37,922,25,1177,226,1207,235,1213,235,1222,238,1252,234,1258,233,1270,231,1285,226,1322,205,1335,184,72,577,85,595,128,635,142,645,168,672,205,712,220,725,233,737,258,760,275,770,290,797,300,805,310,820,365,862,378,875,385,885],
 sp9=[820,25,877,52,895,60,365,70,322,97,228,157,193,181,147,208,130,217,50,268,385,268,500,337,765,553,95,633,82,655,50,677,38,681,22,685,1377,300,1398,313,1425,322,1447,334,1404,517,1425,528,1452,541,1477,552,1498,568,1358,475,1480,703,1460,725,1437,745,1425,765,1335,853,1322,868,1305,885,1292,902,1280,915,1238,958,1217,985,1200,998,575,965,555,972,545,977,528,995,517,1015,510,1040,508,1050,515,1065,533,1093],
 sp10=[18,225,35,245,45,255,82,300,113,335,122,345,153,380,170,405,190,430,210,458,232,480,253,508,275,535,293,540,312,575,325,590,385,667,400,685,418,695,445,735,460,750,472,770,490,788,505,810,522,830,555,790,582,763,605,738,695,645,712,635,728,650,745,672,762,692,800,728,818,755,840,780,863,798,908,825,887,848,945,780,962,763,978,743,993,725,1008,703,1037,670,1065,635,1082,622,1108,595,1118,578,1130,560,1145,550,1175,505,1200,485,1222,460,1240,435,1258,415,1272,397,1305,355,1318,347,1345,305,1357,290,1375,272,1385,260,1418,218,1435,198,1452,180,1465,175,1468,165,1480,142,1492,133,1478,155];
 const spk=(z,a)=>{for(let k=0;k<a.length;k+=2){const p=z(a[k],a[k+1]);red+=`M${fx(p[0])} ${fx(p[1])}h1.3v1.3h-1.3z`}};spk(z8,sp8);spk(z9,sp9);spk(z10,sp10);
 shadow(this,`<style>:host{display:block;width:1037px;height:946px;overflow:hidden;background:#5d6e6c}svg{display:block}</style>
 <svg width="1037" height="946" viewBox="363 95 1037 946">
  <path d="${floor}" fill="#c0c0c0" stroke="#c0c0c0" stroke-width=".5" shape-rendering="crispEdges"/>
  <path d="${toPath(gray)}" fill="#5f706e" shape-rendering="crispEdges"/>
  <path d="${toPath(black)}" fill="#111" shape-rendering="crispEdges"/>
  <path d="${grid}" fill="none" stroke="#9c9c9c" stroke-opacity=".6" stroke-width="1"/>
  <g>
   <circle cx="882" cy="563" r="8" fill="#b4826e"/><path d="M878 558l4 3-2 5zM885 563l3 4-4 1z" fill="#6a4030"/>
   <rect x="880" y="550" width="3" height="6" fill="#666"/><rect x="881" y="556" width="2" height="8" fill="#a8855a"/>
   <rect x="884" y="566" width="6" height="5" fill="#111"/>
   <path d="M884 566 829 604 826.5 600.5 812 618 834.5 609.5 832 606.5 886 569Z" fill="#d81a08"/><path d="M883 567 822 609" stroke="#9e1206" stroke-width="1"/>
  </g>
  <path d="${red}" fill="#f00"/>
 </svg>`)}});
</script>
</body></html>
